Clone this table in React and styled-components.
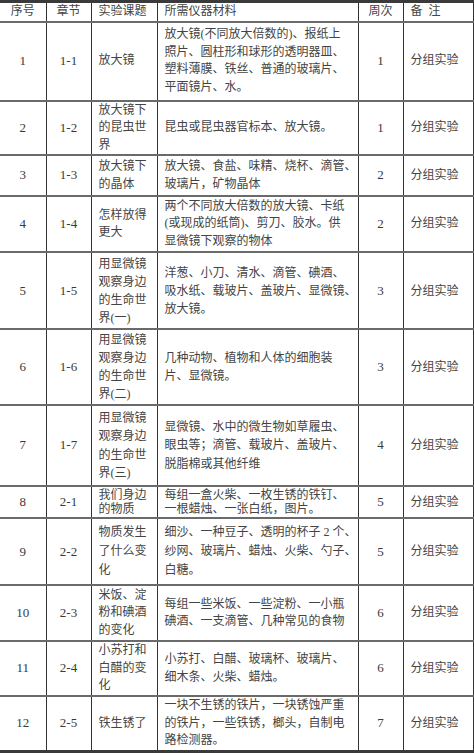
import styled, { createGlobalStyle } from 'styled-components';

const GlobalStyle = createGlobalStyle`
  html, body {
    margin: 0;
    padding: 0;
    background: #fff;
  }
  body {
    width: 474px;
    height: 756px;
    overflow: hidden;
  }
`;

const Table = styled.table`
  width: 474px;
  border-collapse: collapse;
  table-layout: fixed;
  font-family: 'Liberation Serif', 'Noto Sans CJK SC', serif;
  font-size: 12px;
  color: #444;
  border-top: 3px solid #3a3a3a;
  border-bottom: 3px solid #3a3a3a;
`;

const Row = styled.tr`
  height: ${({ $h }) => $h}px;
  line-height: ${({ $lh }) => $lh || 17.5}px;
`;

const Cell = styled.td`
  padding: 0;
  padding-left: ${({ $align }) => ($align === 'left' ? '7px' : '0')};
  text-align: ${({ $align }) => $align || 'center'};
  vertical-align: middle;
  white-space: pre;
  border-left: 1px solid #333;
  border-bottom: 2px solid #6a6a6a;
  overflow: hidden;

  &:first-child {
    border-left: none;
  }
  &:last-child {
    border-right: 2px solid #333;
  }
`;

const Num = styled.span`
  font-size: 13px;
  color: #3a3a3a;
`;

const Line = styled.div`
  white-space: nowrap;
`;

const rows = [
  { no: '1', ch: '1-1', topic: ['放大镜'], mat: ['放大镜(不同放大倍数的)、报纸上', '照片、圆柱形和球形的透明器皿、', '塑料薄膜、铁丝、普通的玻璃片、', '平面镜片、水。'], wk: '1', h: 79 },
  { no: '2', ch: '1-2', topic: ['放大镜下', '的昆虫世', '界'], mat: ['昆虫或昆虫器官标本、放大镜。'], wk: '1', h: 53 },
  { no: '3', ch: '1-3', topic: ['放大镜下', '的晶体'], mat: ['放大镜、食盐、味精、烧杯、滴管、', '玻璃片，矿物晶体'], wk: '2', h: 41 },
  { no: '4', ch: '1-4', topic: ['怎样放得', '更大'], mat: ['两个不同放大倍数的放大镜、卡纸', '(或现成的纸筒)、剪刀、胶水。供', '显微镜下观察的物体'], wk: '2', h: 56 },
  { no: '5', ch: '1-5', topic: ['用显微镜', '观察身边', '的生命世', '界(一)'], mat: ['洋葱、小刀、清水、滴管、碘酒、', '吸水纸、载玻片、盖玻片、显微镜、', '放大镜。'], wk: '3', h: 77, lh: 18 },
  { no: '6', ch: '1-6', topic: ['用显微镜', '观察身边', '的生命世', '界(二)'], mat: ['几种动物、植物和人体的细胞装', '片、显微镜。'], wk: '3', h: 76, lh: 18 },
  { no: '7', ch: '1-7', topic: ['用显微镜', '观察身边', '的生命世', '界(三)'], mat: ['显微镜、水中的微生物如草履虫、', '眼虫等；滴管、载玻片、盖玻片、', '脱脂棉或其他纤维'], wk: '4', h: 81, lh: 18.5 },
  { no: '8', ch: '2-1', topic: ['我们身边', '的物质'], mat: ['每组一盒火柴、一枚生锈的铁钉、', '一根蜡烛、一张白纸，图片。'], wk: '5', h: 32, lh: 14.5 },
  { no: '9', ch: '2-2', topic: ['物质发生', '了什么变', '化'], mat: ['细沙、一种豆子、透明的杯子 2 个、', '纱网、玻璃片、蜡烛、火柴、勺子、', '白糖。'], wk: '5', h: 67, lh: 19 },
  { no: '10', ch: '2-3', topic: ['米饭、淀', '粉和碘酒', '的变化'], mat: ['每组一些米饭、一些淀粉、一小瓶', '碘酒、一支滴管、几种常见的食物'], wk: '6', h: 56 },
  { no: '11', ch: '2-4', topic: ['小苏打和', '白醋的变', '化'], mat: ['小苏打、白醋、玻璃杯、玻璃片、', '细木条、火柴、蜡烛。'], wk: '6', h: 55 },
  { no: '12', ch: '2-5', topic: ['铁生锈了'], mat: ['一块不生锈的铁片，一块锈蚀严重', '的铁片，一些铁锈，榔头，自制电', '路检测器。'], wk: '7', h: 55 },
];

const Lines = ({ items }) => items.map((t, i) => <Line key={i}>{t}</Line>);

const App = () => (
  <>
    <GlobalStyle />
    <Table>
      <colgroup>
        <col style={{ width: 46 }} />
        <col style={{ width: 45 }} />
        <col style={{ width: 66 }} />
        <col style={{ width: 201 }} />
        <col style={{ width: 45 }} />
        <col style={{ width: 71 }} />
      </colgroup>
      <tbody>
        <Row $h={17}>
          <Cell>序号</Cell>
          <Cell>章节</Cell>
          <Cell $align="left">实验课题</Cell>
          <Cell $align="left">所需仪器材料</Cell>
          <Cell>周次</Cell>
          <Cell $align="left">{'备\u2002注'}</Cell>
        </Row>
        {rows.map((r) => (
          <Row key={r.no} $h={r.h} $lh={r.lh}>
            <Cell><Num>{r.no}</Num></Cell>
            <Cell><Num>{r.ch}</Num></Cell>
            <Cell $align="left"><Lines items={r.topic} /></Cell>
            <Cell $align="left"><Lines items={r.mat} /></Cell>
            <Cell><Num>{r.wk}</Num></Cell>
            <Cell $align="left">分组实验</Cell>
          </Row>
        ))}
      </tbody>
    </Table>
  </>
);

export default App;
